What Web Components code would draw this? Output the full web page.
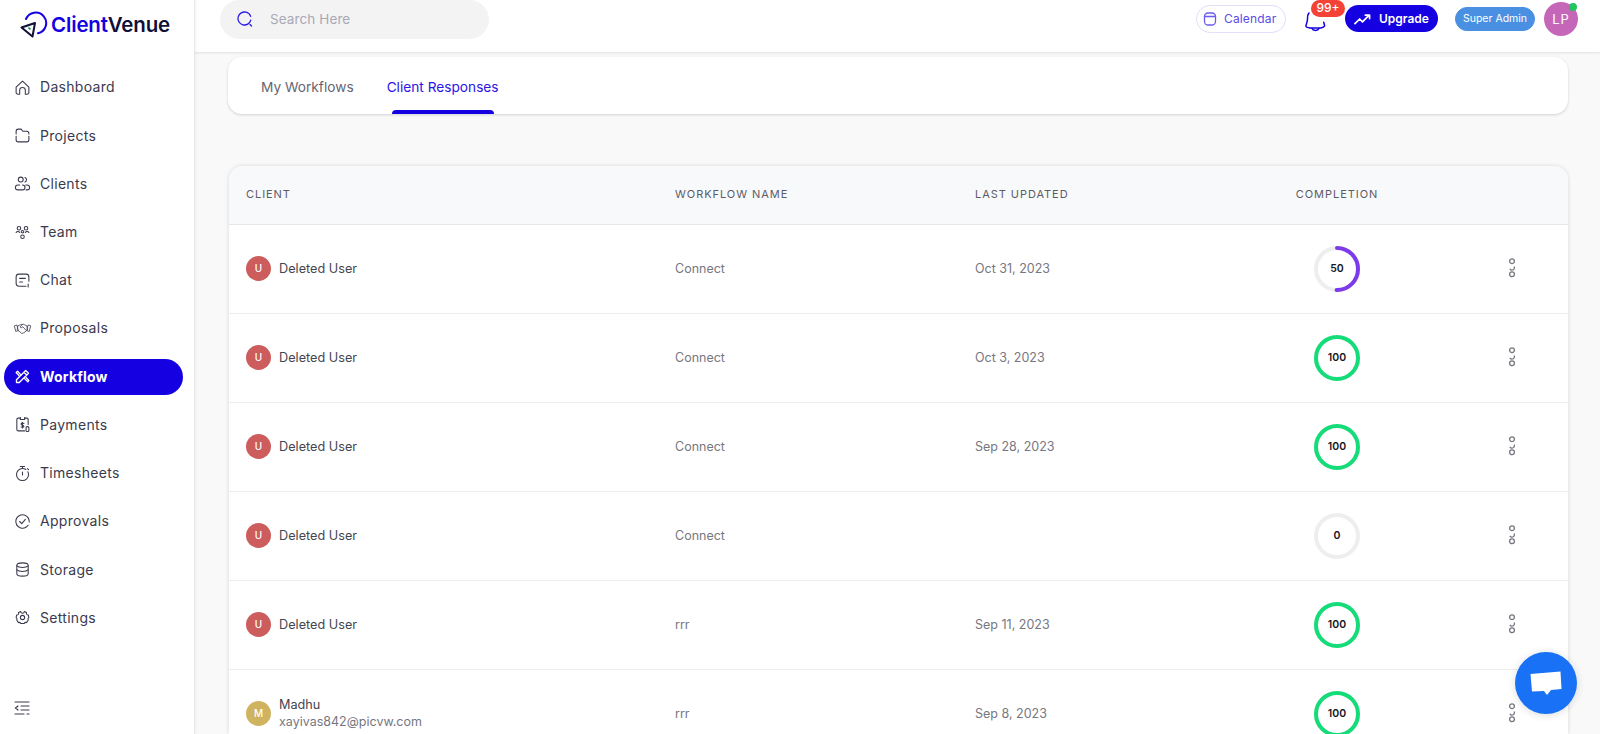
<!DOCTYPE html>
<html lang="en"><head><meta charset="utf-8"><title>ClientVenue</title>
<style>
html,body{margin:0;height:100%;overflow:hidden;background:#f9f9f9;font-family:Inter,"Noto Sans",sans-serif}
cv-app{height:734px}
</style></head><body>
<cv-app></cv-app>
<script>
const ICONS={
dashboard:'<path d="M3 11.500 12 3l9 8.500V19a2.500 2.500 0 0 1-2.500 2.500H16V16a4 4 0 0 0-8 0v5.500H5.500A2.500 2.500 0 0 1 3 19z"/>',
projects:'<path d="M3 10V6a3 3 0 0 1 3-3h4l2.500 3H18a3 3 0 0 1 3 3v1"/><path d="M3 13v5a3 3 0 0 0 3 3h12a3 3 0 0 0 3-3v-5"/>',
clients:'<circle cx="9.500" cy="6.500" r="3.500"/><path d="M15.500 3.500a3.500 3.500 0 0 1 0 6.500"/><path d="M8 14H5.500a3.500 3.500 0 0 0 0 7H12a3.500 3.500 0 0 0 0-7"/><path d="M16.500 14h2a3.500 3.500 0 0 1 0 7h-1.500"/>',
team:'<circle cx="7" cy="6" r="2.500"/><circle cx="17" cy="6" r="2.500"/><circle cx="12" cy="18" r="2.500"/><circle cx="12" cy="11" r="1.800"/><path d="M3 12c1-2 4-2 5 0M16 12c1-2 4-2 5 0"/>',
chat:'<path d="M21 13V7a4 4 0 0 0-4-4H7a4 4 0 0 0-4 4v9a4 4 0 0 0 4 4h10"/><path d="M8 9h8M8 14h4"/><path d="M20 17v4"/>',
proposals:'<g stroke-width="1.100"><path d="M1 8l3-1 2 8-3 1zM23 8l-3-1-2 8 3 1z"/><path d="M6 8c3-1 4-2 6-2s3 1 6 2l1 6-5 4-3 1-6-5z"/><path d="M12 6 8.500 10c1 1.500 2.500 1 4-.5l4.500 5"/></g>',
workflow:'<g stroke-width="1.900"><path d="m3.500 16.500 13-13 4 4-13 13h-4zM14 6l4 4"/><path d="M9 9 5 4.500 3 6.500l4 4M15 15l4.500 4.500 1.500-2-4-4"/></g>',
payments:'<path d="M9 3H6a2 2 0 0 0-2 2v14a2 2 0 0 0 2 2h9M15 3h3a2 2 0 0 1 2 2v7"/><path d="M9 2v3h6V2"/><rect x="17" y="15" width="4" height="7" rx="1.500"/><path d="M12 9v8M14 10.500c-2-1-4-.5-4 1 0 2 4 1 4 3 0 1.500-2 2-4 1"/>',
timesheets:'<circle cx="12" cy="13.500" r="8.500" stroke-dasharray="44 4"/><path d="M9 2h6M12 2v3M12 10v4M19 5l1.500 1.500"/>',
approvals:'<circle cx="12" cy="12" r="9.500" stroke-dasharray="50 5" transform="rotate(60 12 12)"/><path d="m8 12 3 3 5-6"/>',
storage:'<path d="M4 6c0-4.500 16-4.500 16 0v12c0 4.500-16 4.500-16 0z"/><path d="M4 7c3 3 13 3 16 0M4 12.500c3 3 13 3 16 0"/>',
settings:'<path d="M9.500 3.500a2.500 2.500 0 0 0 5 0l3.200 1.300a2.500 2.500 0 0 0 2.500 3.600L21 12a2.500 2.500 0 0 0-.8 3.600l-2.500 3.600a2.500 2.500 0 0 0-3.200 1.300H9.500a2.500 2.500 0 0 0-3.200-1.300l-2.500-3.600A2.500 2.500 0 0 0 3 12l.8-3.600a2.500 2.500 0 0 0 2.500-3.600z"/><circle cx="12" cy="12" r="3"/>'
};
const svg=(name,size)=>`<svg width="${size}" height="${size}" viewBox="0 0 24 24" fill="none" stroke="currentColor" stroke-width="1.500" stroke-linecap="round" stroke-linejoin="round">${ICONS[name]}</svg>`;

class CvNavItem extends HTMLElement{connectedCallback(){
 const s=this.attachShadow({mode:'open'});
 s.innerHTML=`<style>:host{display:flex;align-items:center;height:36px;margin:0 11px 12.240px 4px;padding-left:10px;gap:9px;border-radius:18px;font-size:14px;letter-spacing:.3px;color:#3a3a4e;line-height:1}
 :host([active]){background:#1400e0;color:#fff;font-weight:700;letter-spacing:.2px}svg{display:block}</style>${svg(this.getAttribute('icon'),17)}<span><slot></slot></span>`;
}}
customElements.define('cv-nav-item',CvNavItem);

class CvSidebar extends HTMLElement{connectedCallback(){
 const s=this.attachShadow({mode:'open'});
 s.innerHTML=`<style>:host{display:flex;flex-direction:column;width:194px;background:#fff;border-right:1px solid #e9e9e9;box-shadow:1px 0 3px rgba(0,0,0,.05);height:734px;position:relative;z-index:3;flex:none}
 .logo{display:flex;align-items:center;height:69.300px;box-sizing:border-box;padding:0 0 21px 20px;gap:3px;font-weight:600;font-size:20.500px;letter-spacing:-.15px;color:#101038}
 .logo b{font-weight:600;color:#1400e0}
 nav{display:flex;flex-direction:column}
 .collapse{margin-top:auto;padding:0 0 18px 14px;color:#3a3a4e;line-height:0}</style>
 <div class="logo"><svg width="28" height="28" viewBox="0 0 28 28" fill="none"><path d="M6 9A10.500 10.500 0 1 1 18 23.300" stroke="#1400e0" stroke-width="2" stroke-linecap="round"/><path d="M15 13 1.500 17.500 12.500 26.500z" fill="#fff" stroke="#101038" stroke-width="2" stroke-linejoin="round"/><path d="M8.500 17.500l2 2" stroke="#0a8a4a" stroke-width="1.600"/></svg><span><b>Client</b>Venue</span></div>
 <nav><slot></slot></nav>
 <div class="collapse"><svg width="16" height="16" viewBox="0 0 16 16" fill="none" stroke="currentColor" stroke-width="1.200" stroke-linecap="round"><path d="M1 2h14M7 6h8M7 10h8M1 14h9M13 14h2M4 6 1.500 8 4 10"/></svg></div>`;
}}
customElements.define('cv-sidebar',CvSidebar);

class CvSearch extends HTMLElement{connectedCallback(){
 const s=this.attachShadow({mode:'open'});
 s.innerHTML=`<style>:host{display:flex;align-items:center;width:269px;height:39px;background:#f3f3f3;border-radius:20px;box-sizing:border-box;padding:0 0 2px 17px;gap:17px;color:#a9a9b5;font-size:13.500px;letter-spacing:.1px}</style>
 <svg width="16" height="16" viewBox="0 0 16 16" fill="none" stroke="#2a1ae6" stroke-width="1.300" stroke-linecap="round"><circle cx="7.500" cy="7.500" r="6.500" stroke-dasharray="36 5" transform="rotate(15 7.500 7.500)"/><path d="M13 13.500l1.500 1.500"/></svg><span><slot></slot></span>`;
}}
customElements.define('cv-search',CvSearch);

class CvHeader extends HTMLElement{connectedCallback(){
 const s=this.attachShadow({mode:'open'});
 s.innerHTML=`<style>:host{display:flex;align-items:flex-start;height:53px;box-sizing:border-box;background:#fff;border-bottom:1px solid #e8e8e8;padding-left:25px;box-shadow:0 1px 2px rgba(0,0,0,.05);flex:none;position:relative;z-index:2}
 .right{margin-left:auto;display:flex;align-items:center;height:37px;padding-right:22px}
 .cal{display:flex;align-items:center;gap:6px;width:90px;height:28px;box-sizing:border-box;padding-left:5px;border:1px solid #e2defc;border-radius:14px;color:#5b4be8;font-size:12px;letter-spacing:.15px}
 .bell{position:relative;width:40px;align-self:stretch;margin-left:19px}
 .bell svg{position:absolute;left:0;top:8px}
 .badge{position:absolute;left:6px;top:0;width:34px;height:17px;border-radius:9px;background:#f44336;color:#fff;font-size:12px;font-weight:500;display:flex;align-items:center;justify-content:center;line-height:1;padding-bottom:1px;box-sizing:border-box}
 .up{display:flex;align-items:center;gap:8px;width:93px;height:27px;box-sizing:border-box;padding-left:9px;background:#1400e0;color:#fff;border-radius:14px;font-size:12px;font-weight:600}
 .role{margin-left:17px;width:80px;height:24px;background:#4a90e2;color:#fff;border-radius:12px;font-size:10.500px;display:flex;align-items:center;justify-content:center;box-sizing:border-box;border:1px solid #4a90e2}
 .av{position:relative;margin-left:9px;width:34px;height:34px;border-radius:50%;background:#c566b8;color:#fff;display:flex;align-items:center;justify-content:center;font-size:13px;letter-spacing:.8px}
 .av i{position:absolute;right:1px;top:1px;width:8px;height:8px;border-radius:50%;background:#22c55e}
 </style><slot name="search"></slot>
 <div class="right">
 <div class="cal"><svg width="16" height="16" viewBox="0 0 16 16" fill="none" stroke="#6a5cf0" stroke-width="1.300" stroke-linecap="round"><rect x="2.500" y="2" width="11" height="12" rx="3.500"/><path d="M2.500 5.500h11"/></svg><span>Calendar</span></div>
 <div class="bell"><svg width="21" height="25" viewBox="0 0 21 25" fill="none" stroke="#1400e0" stroke-width="1.500" stroke-linecap="round" stroke-linejoin="round"><path d="M4 5c-1 1-1.500 3-1.500 6 0 4-2 6-1.500 7.500.3.900 1.500 1 4 1.500h11c2-.5 3-1 3.500-1.800 .4-1-.5-2-.8-4"/><path d="M7 20.500c1 2.500 6 2.500 7 0"/></svg><span class="badge">99+</span></div>
 <div class="up"><svg width="17" height="12" viewBox="0 0 18 12" fill="none" stroke="#fff" stroke-width="1.800" stroke-linecap="round" stroke-linejoin="round"><path d="M1 11l5-5 3 3 7-7M12 2h4.500v3.500"/></svg><span>Upgrade</span></div>
 <div class="role">Super Admin</div>
 <div class="av">LP<i></i></div>
 </div>`;
}}
customElements.define('cv-header',CvHeader);

class CvTabs extends HTMLElement{connectedCallback(){
 const s=this.attachShadow({mode:'open'});
 s.innerHTML=`<style>:host{display:flex;margin:4px 32px 0 33px;height:57px;background:#fff;border-radius:14px;box-shadow:0 1px 3px rgba(0,0,0,.16);padding-left:33px;gap:33px;font-size:13.700px;color:#66666f;flex:none}
 div{position:relative;display:flex;align-items:center;height:57px;padding-top:2px;box-sizing:border-box}
 .on{color:#2a14e6}
 .on::after{content:"";position:absolute;left:5px;right:5px;bottom:0;height:4px;background:#1400e0;border-radius:4px 4px 0 0}
 </style><div>My Workflows</div><div class="on">Client Responses</div>`;
}}
customElements.define('cv-tabs',CvTabs);

class CvRing extends HTMLElement{connectedCallback(){
 const v=+this.getAttribute('value'),c=2*Math.PI*21,col=v>=100?'#14dc78':'#7c3aed';
 const s=this.attachShadow({mode:'open'});
 s.innerHTML=`<style>:host{display:block;position:relative;width:46px;height:46px}
 svg{display:block;transform:rotate(-90deg)}
 span{position:absolute;inset:0;display:flex;align-items:center;justify-content:center;font-size:10.500px;font-weight:600;color:#16161e}</style>
 <svg width="46" height="46" viewBox="0 0 46 46" fill="none" stroke-width="4"><circle cx="23" cy="23" r="21" stroke="#eeeeee"/>${v?`<circle cx="23" cy="23" r="21" stroke="${col}" stroke-linecap="round" stroke-dasharray="${c*v/100} ${c}"/>`:''}</svg><span>${v}</span>`;
}}
customElements.define('cv-ring',CvRing);

class CvRow extends HTMLElement{connectedCallback(){
 const a=k=>this.getAttribute(k)||'';
 const s=this.attachShadow({mode:'open'});
 const who=a('email')?`<div class="who"><div class="n">${a('name')}</div><div class="e">${a('email')}</div></div>`:`<div class="n">${a('name')}</div>`;
 s.innerHTML=`<style>:host{display:grid;grid-template-columns:429px 300px 315px 94px 1fr;align-items:center;height:89px;box-sizing:border-box;padding:0 0 2px 17px;border-bottom:1px solid #ececec;font-size:12.500px;color:#77777f}
 .c{display:flex;align-items:center;gap:8px}
 .a{width:25px;height:25px;border-radius:50%;display:flex;align-items:center;justify-content:center;color:#fff;font-size:10px;font-weight:500;background:${a('color')}}
 .n{color:#45454f;line-height:17px;font-size:12.700px}.e{line-height:17px;color:#77777f}
 cv-ring{justify-self:center;margin-top:1px}
 .k{justify-self:end;margin-right:52px;line-height:0}
 </style><div class="c"><div class="a">${a('initial')}</div>${who}</div><div>${a('workflow')}</div><div>${a('date')}</div><cv-ring value="${a('value')}"></cv-ring>
 <div class="k"><svg width="8" height="20" viewBox="0 0 8 20" fill="none" stroke="#77777f" stroke-width="1.300"><circle cx="4" cy="3.200" r="2.400"/><path d="M6.100 8.500a2.400 2.400 0 1 1-4.200 2.400"/><circle cx="4" cy="16.300" r="2.400"/></svg></div>`;
}}
customElements.define('cv-row',CvRow);

class CvTable extends HTMLElement{connectedCallback(){
 const s=this.attachShadow({mode:'open'});
 s.innerHTML=`<style>:host{display:block;margin:52px 32px 0 34px;background:#fff;border-radius:14px 14px 0 0;box-shadow:0 0 4px rgba(0,0,0,.14);overflow:hidden}
 .h{display:grid;grid-template-columns:429px 300px 315px 94px 1fr;align-items:center;height:59px;box-sizing:border-box;padding:0 0 2px 17px;background:#f8f9fb;border-bottom:1px solid #e6e6e6;font-size:11px;letter-spacing:.95px;color:#5c5c66}
 .m{text-align:center;white-space:nowrap}</style>
 <div class="h"><div>CLIENT</div><div>WORKFLOW NAME</div><div>LAST UPDATED</div><div class="m">COMPLETION</div><div></div></div><slot></slot>`;
}}
customElements.define('cv-table',CvTable);

class CvFab extends HTMLElement{connectedCallback(){
 const s=this.attachShadow({mode:'open'});
 s.innerHTML=`<style>:host{position:fixed;left:1515px;top:652px;width:62px;height:62px;border-radius:50%;background:#1972f5;box-shadow:0 1px 8px rgba(0,0,0,.14);display:flex;align-items:center;justify-content:center;z-index:5}</style>
 <svg width="32" height="26" viewBox="0 0 32 26" fill="#fff"><path d="M0.500 4 30.500 1.500 31.500 19 21 20 17 25 14 21 2 21.500z"/></svg>`;
}}
customElements.define('cv-fab',CvFab);

class CvApp extends HTMLElement{connectedCallback(){
 const s=this.attachShadow({mode:'open'});
 const nav=[['dashboard','Dashboard'],['projects','Projects'],['clients','Clients'],['team','Team'],['chat','Chat'],['proposals','Proposals'],['workflow','Workflow',1],['payments','Payments'],['timesheets','Timesheets'],['approvals','Approvals'],['storage','Storage'],['settings','Settings']];
 const du='name="Deleted User" initial="U" color="#cd5c5c"';
 s.innerHTML=`<style>:host{display:flex;height:734px;overflow:hidden}main{flex:1;min-width:0;display:flex;flex-direction:column;overflow:hidden}</style>
 <cv-sidebar>${nav.map(n=>`<cv-nav-item icon="${n[0]}"${n[2]?' active':''}>${n[1]}</cv-nav-item>`).join('')}</cv-sidebar>
 <main><cv-header><cv-search slot="search">Search Here</cv-search></cv-header><cv-tabs></cv-tabs>
 <cv-table>
 <cv-row ${du} workflow="Connect" date="Oct 31, 2023" value="50"></cv-row>
 <cv-row ${du} workflow="Connect" date="Oct 3, 2023" value="100"></cv-row>
 <cv-row ${du} workflow="Connect" date="Sep 28, 2023" value="100"></cv-row>
 <cv-row ${du} workflow="Connect" date="" value="0"></cv-row>
 <cv-row ${du} workflow="rrr" date="Sep 11, 2023" value="100"></cv-row>
 <cv-row name="Madhu" email="xayivas842@picvw.com" initial="M" color="#cfb35f" workflow="rrr" date="Sep 8, 2023" value="100"></cv-row>
 </cv-table></main><cv-fab></cv-fab>`;
}}
customElements.define('cv-app',CvApp);
</script></body></html>
